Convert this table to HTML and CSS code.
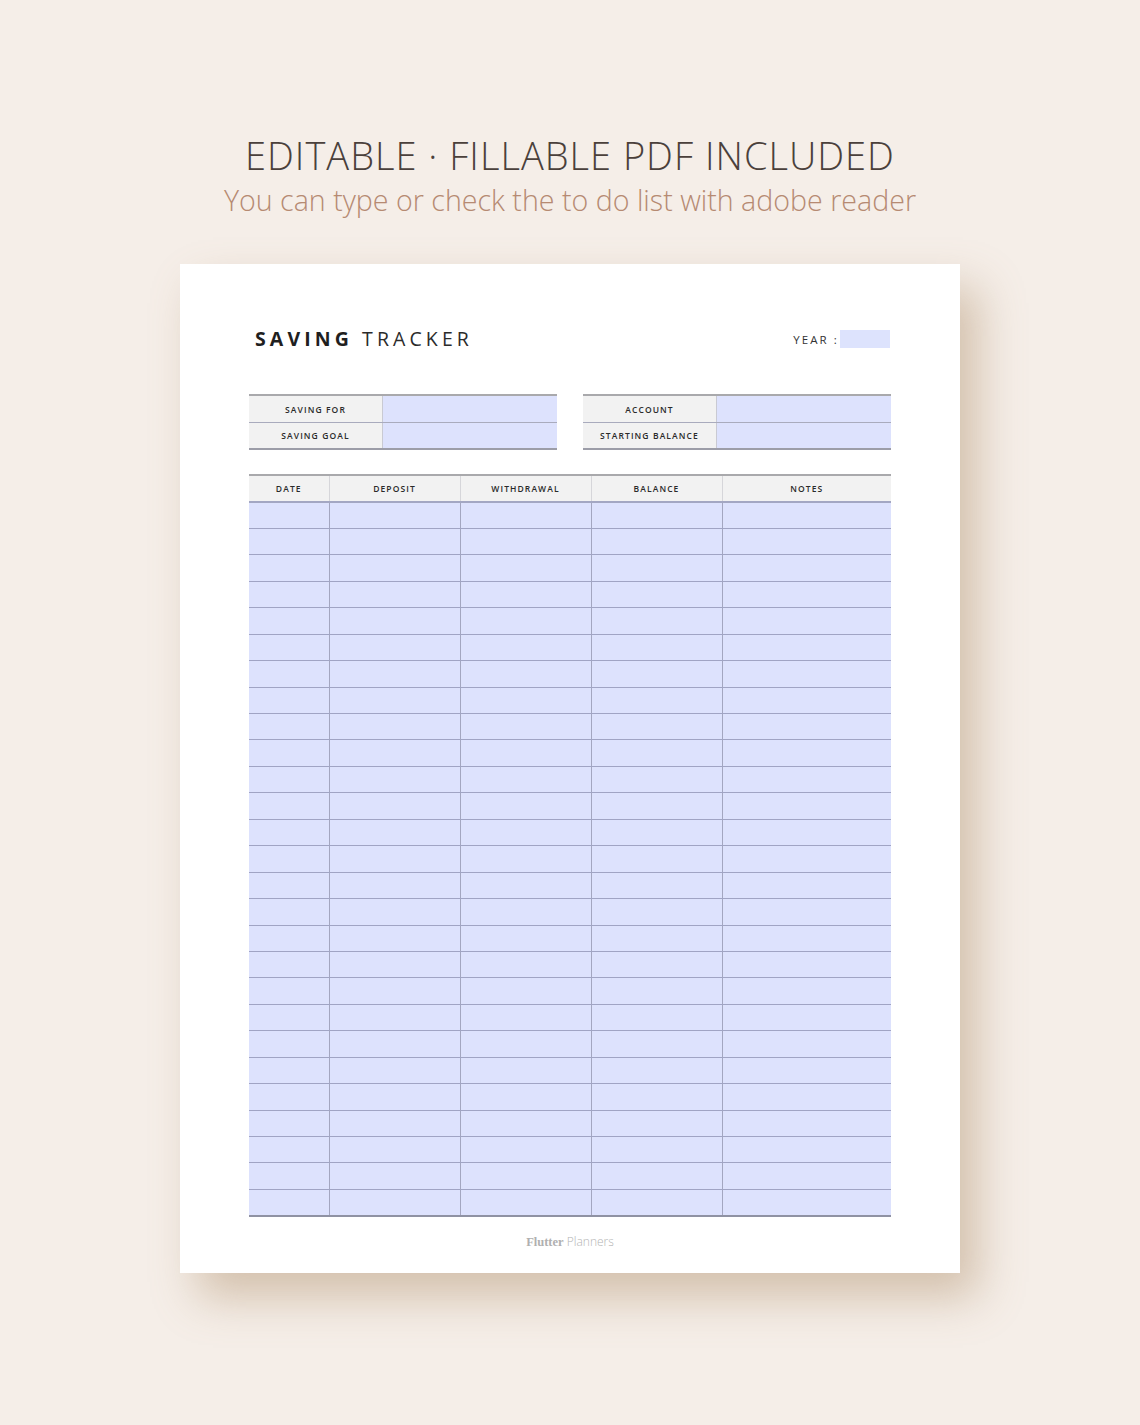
FILE: index.html
```html
<!DOCTYPE html>
<html lang="en">
<head>
<meta charset="utf-8">
<title>Saving Tracker</title>
<link rel="stylesheet" href="styles.css">
</head>
<body>
<header class="promo">
  <h1 class="promo-title">EDITABLE · FILLABLE PDF INCLUDED</h1>
  <p class="promo-sub">You can type or check the to do list with adobe reader</p>
</header>

<main class="sheet">
  <div class="sheet-head">
    <h2 class="sheet-title"><b>SAVING</b> TRACKER</h2>
    <div class="year"><span class="year-label">YEAR :</span><span class="year-box"></span></div>
  </div>

  <div class="info">
    <div class="info-table">
      <div class="info-row"><div class="info-label">SAVING FOR</div><div class="info-value"></div></div>
      <div class="info-row"><div class="info-label">SAVING GOAL</div><div class="info-value"></div></div>
    </div>
    <div class="info-table">
      <div class="info-row"><div class="info-label">ACCOUNT</div><div class="info-value"></div></div>
      <div class="info-row"><div class="info-label">STARTING BALANCE</div><div class="info-value"></div></div>
    </div>
  </div>

  <table class="log">
    <thead>
      <tr><th class="c-date">DATE</th><th class="c-mid">DEPOSIT</th><th class="c-mid">WITHDRAWAL</th><th class="c-mid">BALANCE</th><th class="c-notes">NOTES</th></tr>
    </thead>
    <tbody>
      <tr><td></td><td></td><td></td><td></td><td></td></tr>
      <tr><td></td><td></td><td></td><td></td><td></td></tr>
      <tr><td></td><td></td><td></td><td></td><td></td></tr>
      <tr><td></td><td></td><td></td><td></td><td></td></tr>
      <tr><td></td><td></td><td></td><td></td><td></td></tr>
      <tr><td></td><td></td><td></td><td></td><td></td></tr>
      <tr><td></td><td></td><td></td><td></td><td></td></tr>
      <tr><td></td><td></td><td></td><td></td><td></td></tr>
      <tr><td></td><td></td><td></td><td></td><td></td></tr>
      <tr><td></td><td></td><td></td><td></td><td></td></tr>
      <tr><td></td><td></td><td></td><td></td><td></td></tr>
      <tr><td></td><td></td><td></td><td></td><td></td></tr>
      <tr><td></td><td></td><td></td><td></td><td></td></tr>
      <tr><td></td><td></td><td></td><td></td><td></td></tr>
      <tr><td></td><td></td><td></td><td></td><td></td></tr>
      <tr><td></td><td></td><td></td><td></td><td></td></tr>
      <tr><td></td><td></td><td></td><td></td><td></td></tr>
      <tr><td></td><td></td><td></td><td></td><td></td></tr>
      <tr><td></td><td></td><td></td><td></td><td></td></tr>
      <tr><td></td><td></td><td></td><td></td><td></td></tr>
      <tr><td></td><td></td><td></td><td></td><td></td></tr>
      <tr><td></td><td></td><td></td><td></td><td></td></tr>
      <tr><td></td><td></td><td></td><td></td><td></td></tr>
      <tr><td></td><td></td><td></td><td></td><td></td></tr>
      <tr><td></td><td></td><td></td><td></td><td></td></tr>
      <tr><td></td><td></td><td></td><td></td><td></td></tr>
      <tr><td></td><td></td><td></td><td></td><td></td></tr>
    </tbody>
  </table>

  <footer class="brand"><span class="brand-a">Flutter</span> <span class="brand-b">Planners</span></footer>
</main>
</body>
</html>
```

FILE: styles.css
```css
* { box-sizing: border-box; }

html, body {
  margin: 0;
  padding: 0;
}

body {
  background: #f5eee8;
  width: 1140px;
  min-height: 1425px;
  font-family: "Open Sans", "Liberation Sans", sans-serif;
  display: flex;
  flex-direction: column;
  align-items: center;
}

.promo {
  margin-top: 133px;
  text-align: center;
}

.promo-title {
  margin: 0;
  font-family: "Open Sans", sans-serif;
  font-weight: 300;
  font-size: 38px;
  line-height: 44px;
  letter-spacing: 1px;
  color: #4a403b;
}

.promo-sub {
  margin: 3px 0 0;
  font-family: "Open Sans", sans-serif;
  font-weight: 300;
  font-size: 28.6px;
  line-height: 40px;
  color: #b68a72;
}

.sheet {
  margin-top: 44px;
  width: 780px;
  height: 1009px;
  background: #ffffff;
  padding: 65px 69px 0;
  box-shadow: 18px 24px 42px rgba(170, 138, 100, 0.45);
  display: flex;
  flex-direction: column;
}

.sheet-head {
  display: flex;
  justify-content: space-between;
  align-items: center;
  height: 20px;
}

.sheet-title {
  margin: 0 0 0 6px;
  font-family: "Open Sans", sans-serif;
  font-weight: 400;
  font-size: 19.5px;
  line-height: 20px;
  letter-spacing: 4.1px;
  color: #2b2b2b;
}

.sheet-title b {
  font-weight: 700;
  color: #1f1f1f;
}

.year {
  display: flex;
  align-items: center;
  margin-right: 1px;
}

.year-label {
  font-size: 11.5px;
  letter-spacing: 2.1px;
  color: #333;
  margin-right: 1px;
}

.year-box {
  width: 50px;
  height: 18px;
  background: #dde3fd;
}

.info {
  margin-top: 45px;
  display: flex;
  justify-content: space-between;
}

.info-table {
  width: 308px;
  border-top: 2px solid #a9a9ac;
  border-bottom: 2px solid #9c9da8;
}

.info-row {
  display: flex;
  height: 26px;
}

.info-row + .info-row {
  border-top: 1px solid #a9abbd;
  height: 26px;
}

.info-label {
  width: 134px;
  background: #f2f2f2;
  border-right: 1px solid #c9cad3;
  display: flex;
  align-items: center;
  justify-content: center;
  font-size: 8.5px;
  font-weight: 600;
  letter-spacing: 1.1px;
  color: #2a2a2a;
}

.info-value {
  flex: 1;
  background: #dde2fd;
}

.log {
  margin-top: 24px;
  width: 642px;
  border-collapse: collapse;
  table-layout: fixed;
}

.log th {
  height: 27px;
  padding: 0;
  background: #f2f2f2;
  border-top: 2px solid #a9a9ac;
  border-bottom: 2px solid #a3a7c3;
  font-size: 8.5px;
  font-weight: 600;
  letter-spacing: 1.1px;
  color: #2a2a2a;
  text-align: center;
  vertical-align: middle;
}

.log th + th {
  border-left: 1px solid #d6d6da;
}

.c-date { width: 80px; }
.c-mid { width: 131px; }
.c-notes { width: 169px; }

.log td {
  height: 26.45px;
  padding: 0;
  background: #dde2fd;
  border-bottom: 1px solid #a0a4c4;
}

.log td + td {
  border-left: 1px solid #a3a6c0;
}

.log tbody tr:last-child td {
  border-bottom: 2px solid #8f92a3;
}

.brand {
  margin-top: 17px;
  text-align: center;
  font-size: 12px;
  line-height: 16px;
  color: #b3b3b3;
}

.brand-a {
  font-family: "Liberation Serif", serif;
  font-weight: 700;
  font-size: 12.5px;
  color: #b0b0b0;
}

.brand-b {
  font-family: "Open Sans", sans-serif;
  font-weight: 300;
  color: #b3b3b3;
}
```
